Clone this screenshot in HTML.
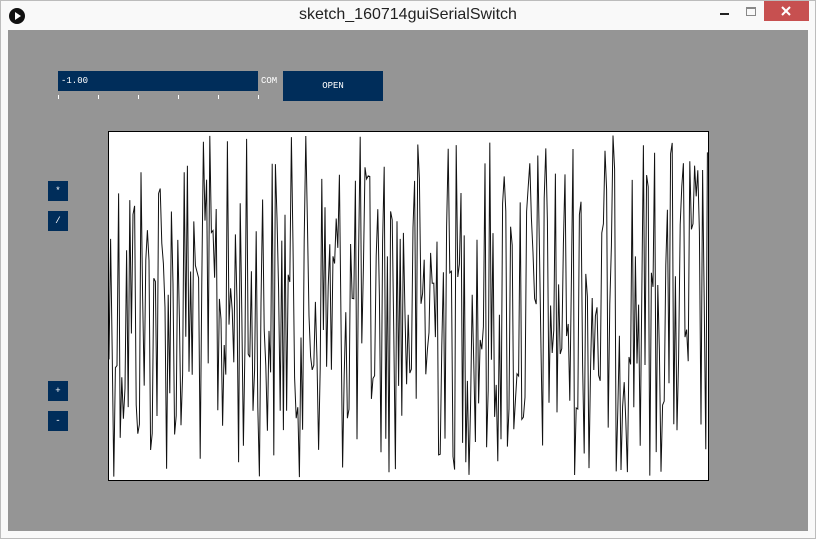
<!DOCTYPE html>
<html><head><meta charset="utf-8"><style>
body{margin:0;width:816px;height:539px;background:#fff;position:relative;overflow:hidden;font-family:"Liberation Sans",sans-serif}
.win{position:absolute;left:0;top:0;width:814px;height:537px;border:1px solid #bcbcbc;background:#f9f9f9}
.title{position:absolute;left:0;width:816px;top:6px;text-align:center;font-size:16px;color:#222}
.gray{position:absolute;left:8px;top:30px;width:800px;height:501px;background:#959595}
.nav{position:absolute;background:#002d5a;color:#fff;font-family:"Liberation Mono",monospace;font-size:9px}
.btn{width:20px;height:20px;text-align:center;line-height:20px}
</style></head><body>
<div class="win"></div>
<div class="gray"></div>
<div style="position:absolute;left:9px;top:8px;width:16px;height:16px;border-radius:50%;background:#111"></div>
<div style="position:absolute;left:15px;top:12px;width:0;height:0;border-left:6px solid #fff;border-top:4px solid transparent;border-bottom:4px solid transparent"></div>
<div class="title">sketch_160714guiSerialSwitch</div>
<div style="position:absolute;left:720px;top:13px;width:9px;height:2px;background:#222"></div>
<div style="position:absolute;left:746px;top:7px;width:8px;height:6px;border:1px solid #888;border-top-width:2px"></div>
<div style="position:absolute;left:764px;top:1px;width:45px;height:20px;background:#c75050"></div>
<svg style="position:absolute;left:0;top:0" width="816" height="539">
<g stroke="#fff" stroke-width="2"><line x1="782" y1="7" x2="790" y2="15"/><line x1="790" y1="7" x2="782" y2="15"/></g>
<g stroke="#fff" stroke-width="1"><line x1="58.5" y1="95" x2="58.5" y2="99"/><line x1="98.5" y1="95" x2="98.5" y2="99"/><line x1="138.5" y1="95" x2="138.5" y2="99"/><line x1="178.5" y1="95" x2="178.5" y2="99"/><line x1="218.5" y1="95" x2="218.5" y2="99"/><line x1="258.5" y1="95" x2="258.5" y2="99"/></g>
</svg>
<div class="nav" style="left:58px;top:71px;width:200px;height:20px;line-height:20px;padding-left:3px;box-sizing:border-box">-1.00</div>
<div style="position:absolute;left:261px;top:76px;font-family:'Liberation Mono',monospace;font-size:9px;color:#fff">COM</div>
<div class="nav" style="left:283px;top:71px;width:100px;height:30px;line-height:30px;text-align:center">OPEN</div>
<div class="nav btn" style="left:48px;top:181px">*</div>
<div class="nav btn" style="left:48px;top:211px">/</div>
<div class="nav btn" style="left:48px;top:381px">+</div>
<div class="nav btn" style="left:48px;top:411px">-</div>
<svg id="plot" style="position:absolute;left:108px;top:131px" width="602" height="351">
<rect x="0.5" y="0.5" width="600" height="349" fill="#fff" stroke="#000"/>
<polyline id="pl" fill="none" stroke="#111" stroke-width="1"/>
</svg>
<script>
var s=12345;function r(){s=(s*1103515245+12345)&0x7fffffff;return s/0x7fffffff;}
var p=[];for(var x=1;x<=600;x+=1.6){var y=3+r()*344;p.push(x.toFixed(1)+","+y.toFixed(1));}
document.getElementById("pl").setAttribute("points",p.join(" "));
</script>
</body></html>
